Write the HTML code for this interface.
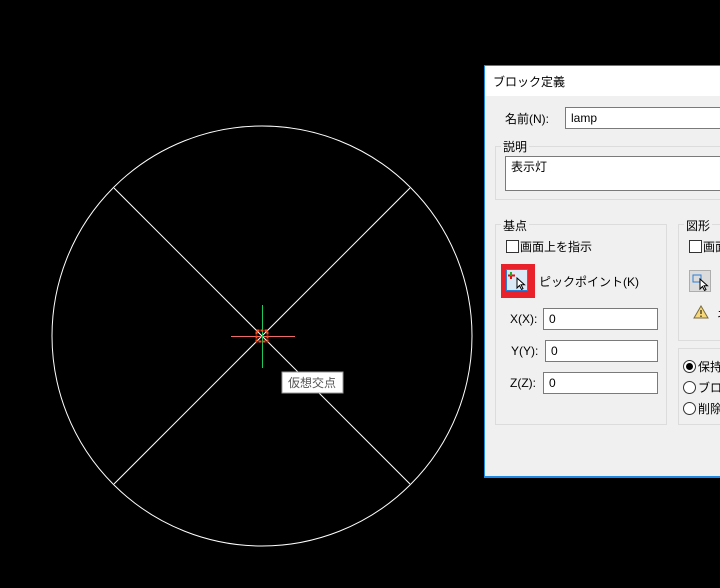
<!DOCTYPE html>
<html><head><meta charset="utf-8"><style>
body{margin:0;width:720px;height:588px;background:#000;position:relative;overflow:hidden;font-family:"Liberation Sans","Noto Sans CJK JP",sans-serif;font-size:12px;color:#000}
.a{position:absolute;white-space:nowrap}
.dlg{left:484px;top:65px;width:240px;height:410px;background:#f0f0f0;border-left:1px solid #1e88e5;border-top:1px solid #1e88e5;border-bottom:2px solid #1e88e5;overflow:hidden}
.tb{left:0;top:0;width:240px;height:30px;background:#fff}
.in{background:#fff;border:1px solid #7a7a7a;box-sizing:border-box;padding:0 5px;font-size:12px;line-height:20px}
.grp{border:1px solid #dcdcdc;box-sizing:border-box}
.lbl{background:#f0f0f0;padding:0 2px}
.cb{width:11px;height:11px;border:1px solid #333;background:#fff}
.rd{width:11px;height:11px;border:1px solid #333;border-radius:50%;background:#fff}
</style></head><body>
<svg class="a" style="left:0;top:0" width="484" height="588">
<circle cx="262" cy="336" r="210" fill="none" stroke="#fff" stroke-width="1"/>
<line x1="114" y1="188" x2="410" y2="484" stroke="#fff"/>
<line x1="410" y1="188" x2="114" y2="484" stroke="#fff"/>
<line x1="231" y1="336.5" x2="295" y2="336.5" stroke="#f06a6a"/>
<line x1="262.5" y1="305" x2="262.5" y2="368" stroke="#1ec85a"/>
<rect x="256.5" y="330.5" width="11" height="11" fill="none" stroke="#ff4a1a" stroke-width="2" stroke-dasharray="3,1"/>
<rect x="282" y="372" width="61" height="21" fill="#fff" stroke="#999"/>
<text x="288" y="387" font-size="12" fill="#555" font-family="Noto Sans CJK JP">仮想交点</text>
</svg>
<div class="a dlg">
<div class="a tb"></div>
<div class="a" style="left:8px;top:7px">ブロック定義</div>
<div class="a" style="left:20px;top:44px">名前(N):</div>
<div class="a in" style="left:80px;top:41px;width:170px;height:22px">lamp</div>
<div class="a grp" style="left:10px;top:80px;width:240px;height:54px"></div>
<div class="a lbl" style="left:16px;top:72px">説明</div>
<div class="a in" style="left:20px;top:90px;width:230px;height:35px">表示灯</div>
<div class="a grp" style="left:10px;top:158px;width:172px;height:201px"></div>
<div class="a lbl" style="left:16px;top:151px">基点</div>
<div class="a cb" style="left:21px;top:174px"></div>
<div class="a" style="left:35px;top:172px">画面上を指示</div>
<div class="a" style="left:16px;top:198px;width:34px;height:34px;background:#e8212b"></div>
<div class="a" style="left:21px;top:203px;width:22px;height:22px;background:#dbe9f7;border:1px solid #2b7fd6;box-sizing:border-box"></div>
<svg class="a" style="left:21px;top:203px" width="22" height="22"><path d="M5 3v7M2 6.5h7" stroke="#d11" stroke-width="2"/><path d="M5 3v4" stroke="#2a2" stroke-width="2"/><path d="M11 9v10l2.5-2.5 2 4 1.5-.8-2-4h3.5z" fill="#fff" stroke="#000"/></svg>
<div class="a" style="left:54px;top:207px">ピックポイント(K)</div>
<div class="a" style="left:25px;top:246px">X(X):</div>
<div class="a in" style="left:58px;top:242px;width:115px;height:22px">0</div>
<div class="a" style="left:26px;top:278px">Y(Y):</div>
<div class="a in" style="left:60px;top:274px;width:113px;height:22px">0</div>
<div class="a" style="left:25px;top:310px">Z(Z):</div>
<div class="a in" style="left:58px;top:306px;width:115px;height:22px">0</div>
<div class="a grp" style="left:193px;top:158px;width:60px;height:117px"></div>
<div class="a lbl" style="left:199px;top:151px">図形</div>
<div class="a cb" style="left:204px;top:174px"></div>
<div class="a" style="left:218px;top:172px">画面上</div>
<div class="a" style="left:204px;top:204px;width:22px;height:22px;background:#dcdcdc;border:1px solid #adadad;box-sizing:border-box"></div>
<svg class="a" style="left:204px;top:204px" width="22" height="22"><rect x="4" y="5" width="8" height="7" fill="none" stroke="#2b7fd6"/><path d="M11 9v10l2.5-2.5 2 4 1.5-.8-2-4h3.5z" fill="#fff" stroke="#000"/></svg>
<svg class="a" style="left:208px;top:239px" width="16" height="14"><path d="M8 1L15 13H1z" fill="#f6d87a" stroke="#7a6a3a"/><path d="M8 5v4M8 10.5v1.5" stroke="#000"/></svg>
<div class="a" style="left:232px;top:240px">ネ</div>
<div class="a grp" style="left:193px;top:282px;width:60px;height:77px"></div>
<div class="a rd" style="left:198px;top:294px"></div><div class="a" style="left:201px;top:297px;width:7px;height:7px;border-radius:50%;background:#000"></div>
<div class="a" style="left:213px;top:292px">保持</div>
<div class="a rd" style="left:198px;top:315px"></div><div class="a" style="left:213px;top:313px">ブロッ</div>
<div class="a rd" style="left:198px;top:336px"></div><div class="a" style="left:213px;top:334px">削除</div>
</div>
</body></html>
